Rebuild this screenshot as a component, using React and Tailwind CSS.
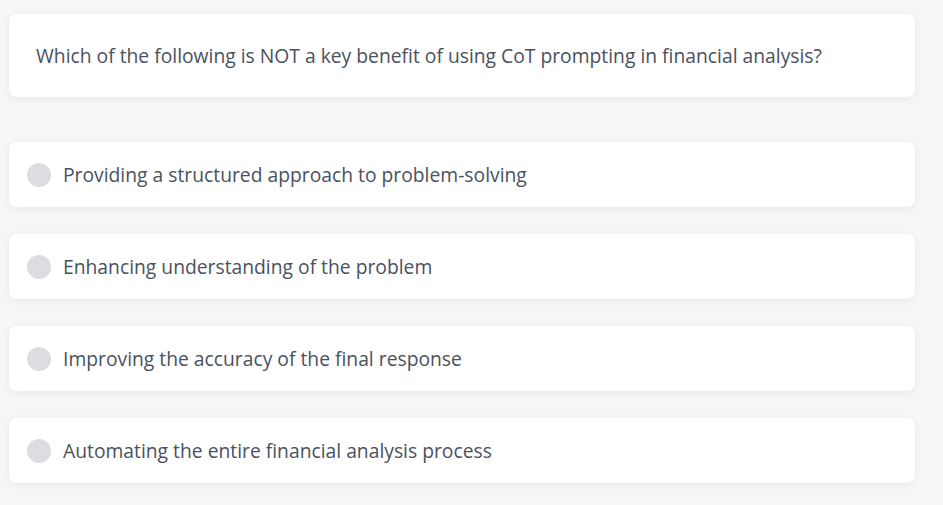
import React from 'react';

const options = [
  'Providing a structured approach to problem-solving',
  'Enhancing understanding of the problem',
  'Improving the accuracy of the final response',
  'Automating the entire financial analysis process',
];

const App = () => {
  return (
    <div
      className="min-h-[505px] bg-[#f5f6f8] pt-[14px] pl-[9px] pr-[28px] text-[#4a5160]"
      style={{ fontFamily: '"Open Sans", "Noto Sans", sans-serif' }}
    >
      {/* Question */}
      <div className="flex h-[83px] items-center rounded-lg bg-white px-[27px] shadow-[0_2px_8px_rgba(0,0,0,0.06)]">
        <p className="pt-[2px] text-[19.3px]">
          Which of the following is NOT a key benefit of using CoT prompting in financial analysis?
        </p>
      </div>

      {/* Options */}
      <div className="mt-[45px] flex flex-col gap-[27px]">
        {options.map((opt) => (
          <div
            key={opt}
            className="flex h-[65px] items-center gap-3 rounded-lg bg-white px-[18px] shadow-[0_2px_8px_rgba(0,0,0,0.06)]"
          >
            <span className="h-6 w-6 shrink-0 rounded-full bg-[#dcdde0]" />
            <span className="pt-[2px] text-[19.3px]">{opt}</span>
          </div>
        ))}
      </div>
    </div>
  );
};

export default App;
